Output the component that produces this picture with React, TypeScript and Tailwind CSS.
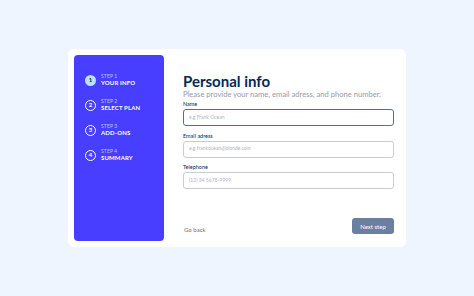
const steps = [
  { n: 1, label: "YOUR INFO", active: true },
  { n: 2, label: "SELECT PLAN", active: false },
  { n: 3, label: "ADD-ONS", active: false },
  { n: 4, label: "SUMMARY", active: false },
];

const fields = [
  { label: "Name", placeholder: "e.g Frank Ocean", focus: true },
  { label: "Email adress", placeholder: "e.g frankocean@blonde.com", focus: false },
  { label: "Telephone", placeholder: "(12) 34 5678-9999", focus: false },
];

export default function App() {
  return (
    <div
      className="w-[474px] h-[296px] bg-[#eff5ff] flex items-center justify-center"
      style={{ fontFamily: 'Lato, "Noto Sans", sans-serif' }}
    >
      <div className="w-[338px] h-[198px] bg-white rounded-[6px] p-[6px] flex">
        {/* Sidebar */}
        <div className="w-[90px] h-full bg-[#483eff] rounded-[4px] pt-[19px] pl-[11px] flex flex-col gap-[13px]">
          {steps.map((s) => (
            <div key={s.n} className="flex items-center gap-[5px]">
              <div
                className={`w-[11px] h-[11px] rounded-full flex items-center justify-center text-[6px] font-bold leading-none ${
                  s.active
                    ? "bg-[#bee2fd] text-[#02295a]"
                    : "border border-white text-white"
                }`}
              >
                {s.n}
              </div>
              <div className="flex flex-col leading-none">
                <span className="text-[5px] text-[#bfc6ff] tracking-wide">STEP {s.n}</span>
                <span className="text-[6px] font-bold text-white tracking-wide mt-[1px]">{s.label}</span>
              </div>
            </div>
          ))}
        </div>

        {/* Main */}
        <div className="flex-1 pl-[19px] pr-[6px] pt-[17px] pb-[6px] flex flex-col">
          <h1 className="text-[15px] font-bold text-[#02295a] leading-[18px]">Personal info</h1>
          <p className="text-[7.6px] text-[#9699ab] leading-[9px] whitespace-nowrap">
            Please provide your name, email adress, and phone number.
          </p>
          <div className="flex flex-col gap-[6.5px] mt-[2px]">
            {fields.map((f) => (
              <div key={f.label} className="flex flex-col">
                <label className="text-[5.5px] text-[#02295a] leading-[7px] mb-[1px]">{f.label}</label>
                <div
                  className={`h-[17px] rounded-[3px] flex items-center px-[5px] text-[5px] text-[#b0b3c2] ${
                    f.focus ? "border-[1.5px] border-[#5a6b98]" : "border border-[#c9ccd6]"
                  }`}
                >
                  {f.placeholder}
                </div>
              </div>
            ))}
          </div>
          <div className="mt-auto flex items-end justify-between">
            <span className="text-[6px] text-[#6a6e80] leading-[8px] pl-[1px] mb-[1px]">Go back</span>
            <button className="w-[42px] h-[16px] rounded-[3px] bg-[#6b7fa3] text-white text-[6px] mb-[1px]">
              Next step
            </button>
          </div>
        </div>
      </div>
    </div>
  );
}
